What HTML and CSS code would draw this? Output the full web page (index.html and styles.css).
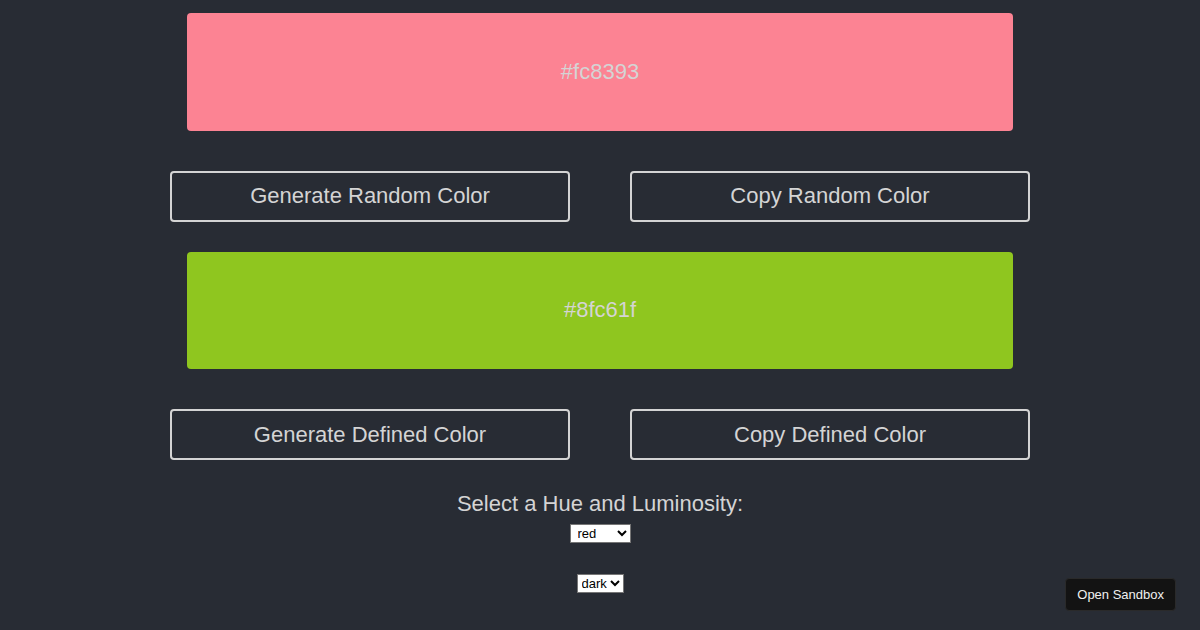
FILE: index.html
```html
<!DOCTYPE html>
<html lang="en">
<head>
  <meta charset="UTF-8" />
  <meta name="viewport" content="width=device-width, initial-scale=1.0"/>
  <title>Random Color</title>
  <link rel="stylesheet" href="styles.css">
</head>
<body>
  <div class="app">
    <div class="swatch" style="background-color: #fc8393;">#fc8393</div>
    <div class="button-row">
      <button type="button" class="btn">Generate Random Color</button>
      <button type="button" class="btn">Copy Random Color</button>
    </div>

    <div class="swatch swatch-second" style="background-color: #8fc61f;">#8fc61f</div>
    <div class="button-row">
      <button type="button" class="btn">Generate Defined Color</button>
      <button type="button" class="btn">Copy Defined Color</button>
    </div>

    <p class="label">Select a Hue and Luminosity:</p>
    <select class="picker hue">
      <option>red</option>
      <option>orange</option>
      <option>yellow</option>
      <option>green</option>
      <option>blue</option>
      <option>purple</option>
      <option>pink</option>
    </select>
    <select class="picker luminosity">
      <option>dark</option>
      <option>light</option>
      <option>bright</option>
    </select>
  </div>

  <a class="sandbox" href="#">Open Sandbox</a>
</body>
</html>
```

FILE: styles.css
```css
* {
  box-sizing: border-box;
}

body {
  margin: 0;
  background-color: #282c34;
  font-family: 'Liberation Sans', Arial, sans-serif;
  color: #d4d4d4;
  height: 100vh;
}

.app {
  display: flex;
  flex-direction: column;
  align-items: center;
  padding-top: 13px;
}

.swatch {
  width: 826px;
  height: 117.5px;
  border-radius: 4px;
  display: flex;
  align-items: center;
  justify-content: center;
  font-size: 22px;
  color: #d4d4d4;
}

.swatch-second {
  margin-top: 30px;
}

.button-row {
  display: flex;
  gap: 60px;
  margin-top: 40px;
}

.btn {
  width: 400px;
  height: 51px;
  background-color: transparent;
  border: 2px solid #d4d4d4;
  border-radius: 4px;
  color: #d4d4d4;
  font-family: 'Liberation Sans', Arial, sans-serif;
  font-size: 22px;
  cursor: pointer;
}

.label {
  margin: 31px 0 7px;
  font-size: 22px;
  line-height: 26px;
}

.picker {
  font-family: 'Liberation Sans', Arial, sans-serif;
  font-size: 13px;
  height: 19px;
  background-color: #fff;
  color: #000;
  border: 1px solid #767676;
  border-radius: 0;
  padding: 0;
}

.hue {
  width: 61px;
  padding-left: 3px;
}

.luminosity {
  width: 47px;
  margin-top: 31px;
}

.sandbox {
  position: fixed;
  right: 24px;
  bottom: 19px;
  background-color: #131313;
  color: #f0f0f0;
  font-family: 'Liberation Sans', Arial, sans-serif;
  font-size: 13px;
  text-decoration: none;
  padding: 8px 11px;
  border-radius: 4px;
  border: 1px solid #2a2a2a;
}
```
